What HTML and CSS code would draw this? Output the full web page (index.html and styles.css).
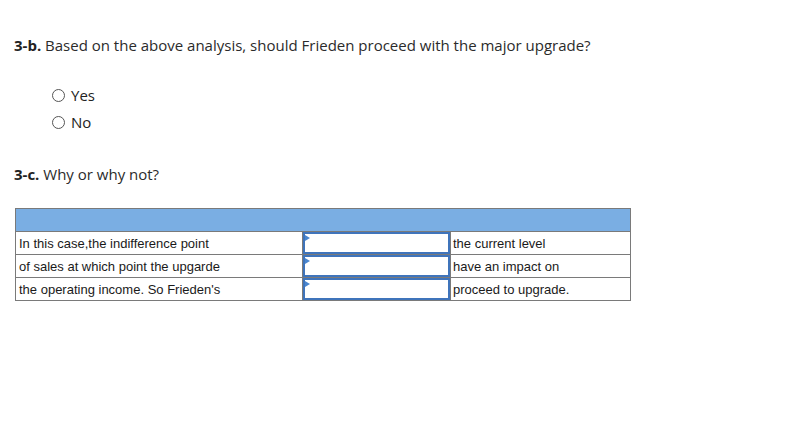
FILE: index.html
```html
<!DOCTYPE html>
<html>
<head>
<meta charset="utf-8">
<link rel="stylesheet" href="styles.css">
</head>
<body>
<div class="page">
  <p class="q"><b>3-b.</b> Based on the above analysis, should Frieden proceed with the major upgrade?</p>
  <div class="opts">
    <label class="opt"><span class="radio"></span>Yes</label>
    <label class="opt"><span class="radio"></span>No</label>
  </div>
  <p class="q q2"><b>3-c.</b> Why or why not?</p>
  <table class="grid">
    <tr class="head"><td colspan="3"></td></tr>
    <tr><td class="c1">In this case,the indifference point</td><td class="c2"><div class="sel"></div></td><td class="c3">the current level</td></tr>
    <tr><td class="c1">of sales at which point the upgarde</td><td class="c2"><div class="sel"></div></td><td class="c3">have an impact on</td></tr>
    <tr><td class="c1">the operating income. So Frieden's</td><td class="c2"><div class="sel"></div></td><td class="c3">proceed to upgrade.</td></tr>
  </table>
</div>
</body>
</html>
```
FILE: styles.css
```css
html, body { margin: 0; padding: 0; background: #fff; }
.page { padding: 35px 0 0 14px; font-family: "Open Sans", sans-serif; color: #2b2b2b; }
.q { margin: 0; font-size: 15px; line-height: 20px; }
.q b { font-weight: 700; color: #222; }
.opts { padding: 30px 0 0 38px; display: flex; flex-direction: column; gap: 7px; }
.opt { display: flex; align-items: center; font-size: 15px; line-height: 20px; color: #222; }
.radio { width: 13px; height: 13px; border: 1px solid #555; border-radius: 50%; margin-right: 6px; box-sizing: border-box; }
.q2 { margin-top: 32px; }
.grid { margin-top: 24px; margin-left: 1px; border-collapse: collapse; width: 616px; font-family: "Liberation Sans", Arial, sans-serif; font-size: 13px; color: #1a1a1a; }
.grid td { border: 1px solid #7a7a7a; padding: 0 3px; height: 22px; }
.head td { background: #7aaee3; height: 22px; }
.c1 { width: 280px; }
.c2 { width: 147px; padding: 0 !important; }
.c3 { padding-left: 2px !important; }
.sel { position: relative; height: 18px; border: 2px solid #3f74bb; }
.sel::before { content: ""; position: absolute; left: 0; top: 1px; border-left: 5px solid #4a86cf; border-top: 3px solid transparent; border-bottom: 3px solid transparent; }
```
